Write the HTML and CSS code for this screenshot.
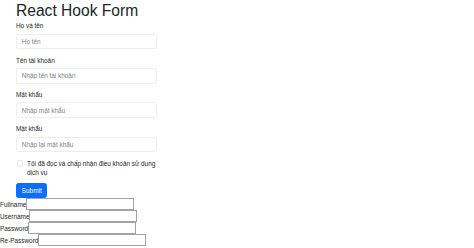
FILE: index.html
```html
<!DOCTYPE html>
<html lang="vi">
<head>
<meta charset="utf-8">
<title>React Hook Form</title>
<link rel="stylesheet" href="styles.css">
</head>
<body>
<div class="container">
  <h1 class="title">React Hook Form</h1>
  <form class="form">
    <div class="field">
      <label class="form-label">Họ và tên</label>
      <input class="form-control" type="text" placeholder="Họ tên">
    </div>
    <div class="field">
      <label class="form-label">Tên tài khoản</label>
      <input class="form-control" type="text" placeholder="Nhập tên tài khoản">
    </div>
    <div class="field">
      <label class="form-label">Mật khẩu</label>
      <input class="form-control" type="password" placeholder="Nhập mật khẩu">
    </div>
    <div class="field">
      <label class="form-label">Mật khẩu</label>
      <input class="form-control" type="password" placeholder="Nhập lại mật khẩu">
    </div>
    <div class="form-check">
      <span class="check-box"></span>
      <span class="check-label">Tôi đã đọc và chấp nhận điều khoản sử dụng dịch vụ</span>
    </div>
    <button class="btn-submit" type="button">Submit</button>
  </form>
</div>
<div class="plain">
  <div class="plain-row"><span>Fullname</span><input class="plain-input" type="text"></div>
  <div class="plain-row"><span>Username</span><input class="plain-input" type="text"></div>
  <div class="plain-row"><span>Password</span><input class="plain-input" type="password"></div>
  <div class="plain-row"><span>Re-Password</span><input class="plain-input" type="password"></div>
  <div class="plain-row"><span class="plain-check"></span><span>Tôi đã đọc và chấp nhận điều khoản sử dụng dịch vụ</span></div>
</div>
</body>
</html>
```
FILE: styles.css
```css
html, body {
  margin: 0;
  padding: 0;
  background: #fff;
}
body {
  font-family: "Liberation Sans", Arial, sans-serif;
  font-size: 6.4px;
  line-height: 1.5;
  color: #212529;
}
.container {
  padding-left: 16px;
  width: 141px;
}
.title {
  font-size: 15.6px;
  font-weight: 400;
  line-height: 19.2px;
  margin: 0 0 1.2px;
  padding-top: 0.8px;
}
.form {
  margin: 0;
}
.field {
  margin-bottom: 6.4px;
}
.form-label {
  display: block;
  margin-bottom: 2.8px;
}
.form-control {
  display: block;
  box-sizing: border-box;
  width: 100%;
  height: 15.6px;
  padding: 2.4px 4.8px;
  font-family: inherit;
  font-size: 6.4px;
  line-height: 1.5;
  color: #212529;
  background: #fff;
  border: 1px solid #eceef0;
  border-radius: 2.4px;
  outline: none;
}
.form-control::placeholder {
  color: #7d848a;
}
.form-check {
  display: flex;
  align-items: flex-start;
  gap: 3.6px;
  margin-bottom: 4.8px;
  padding-left: 1px;
}
.check-box {
  flex: none;
  box-sizing: border-box;
  width: 6.4px;
  height: 6.4px;
  margin-top: 1.6px;
  border: 1px solid #e3e6e9;
  border-radius: 1.2px;
  background: #fff;
}
.check-label {
  flex: 1;
}
.btn-submit {
  display: block;
  box-sizing: border-box;
  height: 15.6px;
  padding: 2.4px 4.8px;
  font-family: inherit;
  font-size: 6.4px;
  line-height: 1.5;
  color: #fff;
  background: #0d6efd;
  border: 0.4px solid #0d6efd;
  border-radius: 2.4px;
}
.plain-row {
  display: flex;
  align-items: center;
  height: 12px;
}
.plain-input {
  box-sizing: border-box;
  width: 108px;
  height: 12px;
  margin: 0;
  padding: 0 1px;
  font-family: inherit;
  font-size: 6.4px;
  border: 1px solid #a3a3a3;
  border-radius: 0;
  background: #fff;
}
.plain-check {
  box-sizing: border-box;
  width: 6px;
  height: 6px;
  margin-right: 3px;
  border: 1px solid #a3a3a3;
}
```
